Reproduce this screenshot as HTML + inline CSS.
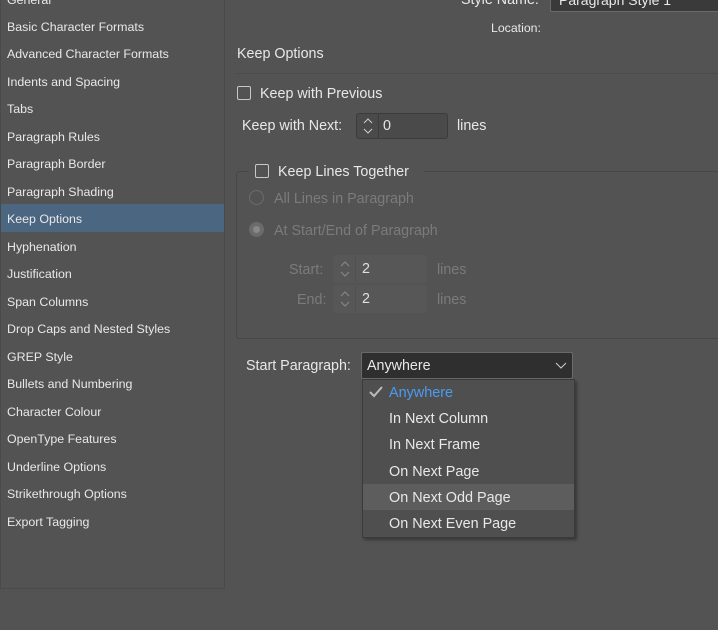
<!DOCTYPE html>
<html><head><style>
body{margin:0;width:718px;height:629px;background:#535353;overflow:hidden;font-family:"Liberation Sans",Tahoma,sans-serif;color:#e8e8e8;position:relative}
#w{position:absolute;left:0;top:1px;width:718px;height:629px}
.a{position:absolute;white-space:nowrap}
.side{position:absolute;left:0;top:-3px;width:223px;height:590px;border:1px solid #4a4a4a;border-top:none}
.it{position:absolute;left:7px;font-size:12.4px;line-height:27px}
.sel{position:absolute;left:1px;top:203px;width:223px;height:28px;background:#4b6680}
.t14{font-size:14.3px}
.dis{color:#7b7b7b}
.cb{position:absolute;width:12px;height:12px;border:1px solid #c8c8c8;border-radius:2px}
.spin{position:absolute;border:1px solid #3c3c3c;border-radius:3px;background:#4a4a4a}
.spin .s{position:absolute;left:0;top:0;bottom:0;width:21px;border-right:1px solid #3c3c3c}
.dd{position:absolute;left:361px;top:351px;width:210px;height:25px;background:#2f2f2f;border:1px solid #6a6a6a;border-radius:2px}
.menu{position:absolute;left:362px;top:378px;width:211px;height:157px;background:#4f4f4f;border:1px solid #3a3a3a;box-shadow:2px 2px 3px rgba(0,0,0,.35)}
.mi{position:absolute;left:26px;font-size:14.4px;line-height:26px}
</style></head><body><div id="w">
<div class="side"></div>
<div class="sel"></div>
<div class="it" style="top:-14px">General</div>
<div class="it" style="top:13px">Basic Character Formats</div>
<div class="it" style="top:40px">Advanced Character Formats</div>
<div class="it" style="top:68px">Indents and Spacing</div>
<div class="it" style="top:95px">Tabs</div>
<div class="it" style="top:123px">Paragraph Rules</div>
<div class="it" style="top:150px">Paragraph Border</div>
<div class="it" style="top:178px">Paragraph Shading</div>
<div class="it" style="top:205px">Keep Options</div>
<div class="it" style="top:233px">Hyphenation</div>
<div class="it" style="top:260px">Justification</div>
<div class="it" style="top:288px">Span Columns</div>
<div class="it" style="top:315px">Drop Caps and Nested Styles</div>
<div class="it" style="top:343px">GREP Style</div>
<div class="it" style="top:370px">Bullets and Numbering</div>
<div class="it" style="top:398px">Character Colour</div>
<div class="it" style="top:425px">OpenType Features</div>
<div class="it" style="top:453px">Underline Options</div>
<div class="it" style="top:480px">Strikethrough Options</div>
<div class="it" style="top:508px">Export Tagging</div>

<div class="a t14" style="left:461px;top:-9px">Style Name:</div>
<div class="a" style="left:550px;top:-10px;width:180px;height:19px;border:1px solid #6a6a6a;border-radius:2px;background:#3a3a3a;font-size:14px;padding-left:8px;line-height:17px">Paragraph Style 1</div>
<div class="a" style="left:491px;top:20px;font-size:12.3px">Location:</div>
<div class="a" style="left:236px;top:72px;width:482px;height:1px;background:#4b4b4b"></div>
<div class="a" style="left:237px;top:45px;font-size:14.3px">Keep Options</div>

<div class="cb" style="left:237px;top:85px"></div>
<div class="a t14" style="left:260px;top:85px">Keep with Previous</div>
<div class="a t14" style="left:242px;top:117px">Keep with Next:</div>
<div class="spin" style="left:356px;top:112px;width:90px;height:24px"><div class="s"></div><div class="a" style="left:26px;top:4px;font-size:14.3px">0</div><svg class="a" style="left:5px;top:3px" width="12" height="18"><path d="M2 6 L6 2 L10 6 M2 12 L6 16 L10 12" stroke="#ccc" fill="none"/></svg></div>
<div class="a t14" style="left:457px;top:117px">lines</div>

<div class="a" style="left:236px;top:170px;width:482px;height:166px;border:1px solid #474747;border-right:none;border-radius:3px 0 0 3px"></div>
<div class="a" style="left:249px;top:164px;width:175px;height:12px;background:#535353"></div>
<div class="cb" style="left:255px;top:163px"></div>
<div class="a t14" style="left:278px;top:163px">Keep Lines Together</div>
<div class="a" style="left:249px;top:189px;width:13px;height:13px;border:1px solid #6b6b6b;border-radius:50%"></div>
<div class="a t14 dis" style="left:274px;top:190px">All Lines in Paragraph</div>
<div class="a" style="left:249px;top:221px;width:13px;height:13px;border:1px solid #6b6b6b;border-radius:50%;background:#6b6b6b"></div>
<div class="a" style="left:253px;top:225px;width:7px;height:7px;border-radius:50%;background:#888"></div>
<div class="a t14 dis" style="left:274px;top:222px">At Start/End of Paragraph</div>
<div class="a t14 dis" style="left:289px;top:261px">Start:</div>
<div class="spin" style="left:333px;top:254px;width:92px;height:26px;background:#575757;border-color:#575757"><div class="s" style="border-color:#505050"></div><div class="a" style="left:28px;top:5px;font-size:14.3px;color:#e0e0e0">2</div><svg class="a" style="left:5px;top:4px" width="12" height="18"><path d="M2 6 L6 2 L10 6 M2 12 L6 16 L10 12" stroke="#8a8a8a" fill="none"/></svg></div>
<div class="a t14 dis" style="left:437px;top:261px">lines</div>
<div class="a t14 dis" style="left:297px;top:291px">End:</div>
<div class="spin" style="left:333px;top:284px;width:92px;height:26px;background:#575757;border-color:#575757"><div class="s" style="border-color:#505050"></div><div class="a" style="left:28px;top:5px;font-size:14.3px;color:#e0e0e0">2</div><svg class="a" style="left:5px;top:4px" width="12" height="18"><path d="M2 6 L6 2 L10 6 M2 12 L6 16 L10 12" stroke="#8a8a8a" fill="none"/></svg></div>
<div class="a t14 dis" style="left:437px;top:291px">lines</div>

<div class="a t14" style="left:246px;top:357px">Start Paragraph:</div>
<div class="dd"><div class="a t14" style="left:5px;top:5px">Anywhere</div><svg class="a" style="left:193px;top:9px" width="12" height="8"><path d="M1 1 L6 6 L11 1" stroke="#ccc" fill="none"/></svg></div>
<div class="menu">
<div class="a" style="left:0;top:104px;width:211px;height:26px;background:#5d5d5d"></div>
<svg class="a" style="left:6px;top:6px" width="14" height="12"><path d="M1 6 L5 10 L13 1" stroke="#bbb" stroke-width="2" fill="none"/></svg>
<div class="mi" style="top:0;color:#4a9cf2">Anywhere</div>
<div class="mi" style="top:26px">In Next Column</div>
<div class="mi" style="top:52px">In Next Frame</div>
<div class="mi" style="top:79px">On Next Page</div>
<div class="mi" style="top:105px">On Next Odd Page</div>
<div class="mi" style="top:131px">On Next Even Page</div>
</div>
</div></body></html>
